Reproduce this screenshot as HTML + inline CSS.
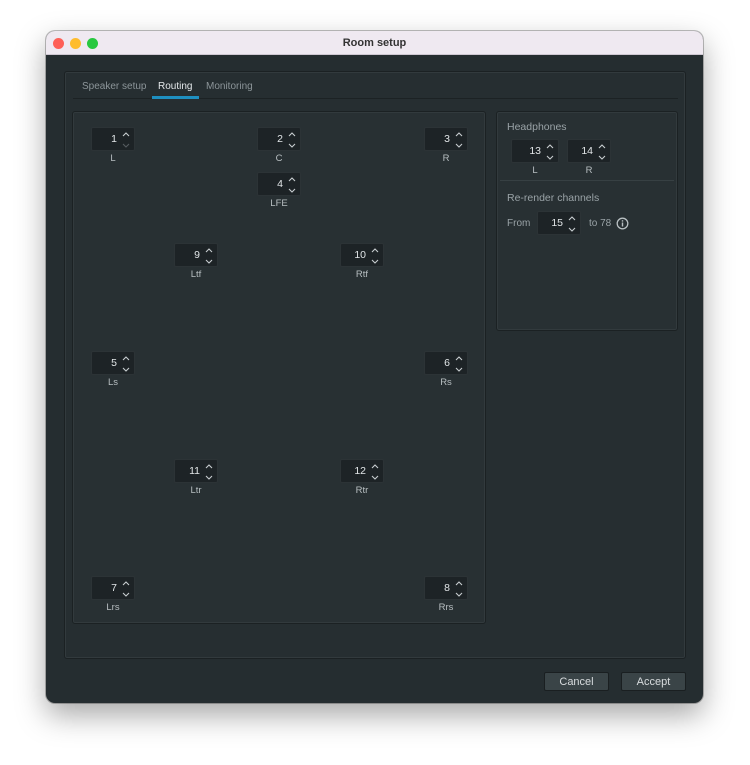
<!DOCTYPE html>
<html><head><style>
*{margin:0;padding:0;box-sizing:border-box}
body{width:750px;height:765px;background:#fff;position:relative;overflow:hidden;font-family:"Liberation Sans",sans-serif}
.win{position:absolute;left:46px;top:31px;width:657px;height:672px;border-radius:9px;background:#252d30;overflow:hidden;box-shadow:0 12px 30px rgba(0,0,0,.35),0 0 0 1px rgba(0,0,0,.25)}
.title{position:absolute;left:0;top:0;width:657px;height:24px;background:#efe9f1;border-bottom:1px solid #cfc8d2;text-align:center;font-size:11px;font-weight:bold;line-height:25px;color:#333}
.dot{position:absolute;top:7px;width:11px;height:11px;border-radius:50%}
.abs{position:absolute}
.panel{position:absolute;border:1px solid #1b2123;box-shadow:inset 0 0 0 1px #323a3d;border-radius:3px;background:#283033}
.tab{position:absolute;top:81px;font-size:10px;color:#8c9599}
.sb{position:absolute;width:44px;height:24px;background:#1d2326;border:1px solid #2c3336;border-radius:2px}
.sb .n{position:absolute;right:17px;top:5px;font-size:10.5px;color:#e2e6e8}
.sb svg{position:absolute;right:4px;top:3px}
.lb{position:absolute;font-size:9.5px;color:#b8bfc2;text-align:center;width:44px}
.btn{position:absolute;top:672px;width:65px;height:19px;background:#3a4447;border:1px solid #1a1f21;border-radius:2px;color:#d8dcde;font-size:11px;text-align:center;line-height:18px}
.t{position:absolute;font-size:10px;color:#9aa3a7}
</style></head><body>
<div class="win">
<div class="title">Room setup
<div class="dot" style="left:7px;background:#fe5f57"></div>
<div class="dot" style="left:24px;background:#febc2e"></div>
<div class="dot" style="left:41px;background:#28c840"></div>
</div>
</div>
<div class="panel" style="left:64px;top:71px;width:622px;height:588px;background:#262e31"></div>
<div class="abs" style="left:73px;top:98px;width:605px;height:1px;background:#1c2224"></div>
<div class="tab" style="left:82px">Speaker setup</div>
<div class="tab" style="left:158px;color:#e4e8ea">Routing</div>
<div class="abs" style="left:152px;top:96px;width:47px;height:3px;background:#1e8fc0"></div>
<div class="tab" style="left:206px">Monitoring</div>
<div class="panel" style="left:72px;top:111px;width:414px;height:513px"></div>
<div class="panel" style="left:496px;top:111px;width:182px;height:220px"></div>
<div class="abs" style="left:500px;top:180px;width:174px;height:1px;background:#374043"></div>
<div class="t" style="left:507px;top:121px;font-size:10.5px">Headphones</div>
<div class="t" style="left:507px;top:192px;font-size:10.5px">Re-render channels</div>
<div class="t" style="left:507px;top:218px">From</div>
<div class="t" style="left:589px;top:218px">to 78</div>
<svg class="abs" style="left:616px;top:217px" width="13" height="13" viewBox="0 0 13 13"><circle cx="6.5" cy="6.5" r="5.3" fill="none" stroke="#b8bfc2" stroke-width="1.3"/><rect x="5.8" y="5.5" width="1.4" height="4" fill="#b8bfc2"/><rect x="5.8" y="3.2" width="1.4" height="1.4" fill="#b8bfc2"/></svg>
<div id="s"></div>
<div class="btn" style="left:544px">Cancel</div>
<div class="btn" style="left:621px">Accept</div>
<script>
var d=[[1,91,127,"L"],[2,257,127,"C"],[3,424,127,"R"],[4,257,172,"LFE"],[9,174,243,"Ltf"],[10,340,243,"Rtf"],[5,91,351,"Ls"],[6,424,351,"Rs"],[11,174,459,"Ltr"],[12,340,459,"Rtr"],[7,91,576,"Lrs"],[8,424,576,"Rrs"],[13,511,139,"L"],[14,567,139,"R"],[15,537,211,""]];
var h="";d.forEach(function(a){var w=a[0]==13?48:44;var dn=a[0]==1?"#555c5f":"#c8ced0";
h+='<div class="sb" style="left:'+a[1]+'px;top:'+a[2]+'px;width:'+w+'px"><span class="n">'+a[0]+'</span><svg width="8" height="18" viewBox="0 0 8 18"><path d="M1 5 L4 2 L7 5" fill="none" stroke="#c8ced0" stroke-width="1.1"/><path d="M1 13 L4 16 L7 13" fill="none" stroke="'+dn+'" stroke-width="1.1"/></svg></div>';
if(a[3])h+='<div class="lb" style="left:'+(a[1]+(w-44)/2)+'px;top:'+(a[2]+26)+'px">'+a[3]+'</div>';});
document.getElementById("s").innerHTML=h;
</script>
</body></html>
